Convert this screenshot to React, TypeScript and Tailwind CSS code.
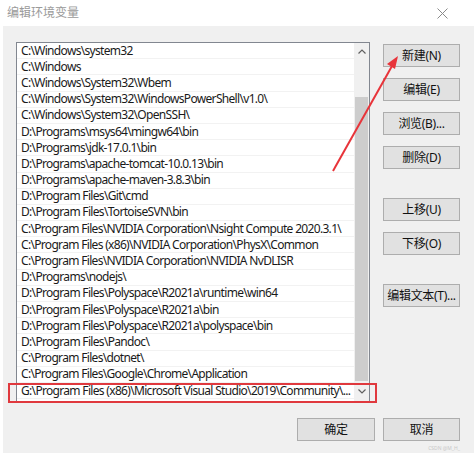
import React from 'react';

const PATHS = [
  'C:\\Windows\\system32',
  'C:\\Windows',
  'C:\\Windows\\System32\\Wbem',
  'C:\\Windows\\System32\\WindowsPowerShell\\v1.0\\',
  'C:\\Windows\\System32\\OpenSSH\\',
  'D:\\Programs\\msys64\\mingw64\\bin',
  'D:\\Programs\\jdk-17.0.1\\bin',
  'D:\\Programs\\apache-tomcat-10.0.13\\bin',
  'D:\\Programs\\apache-maven-3.8.3\\bin',
  'D:\\Program Files\\Git\\cmd',
  'D:\\Program Files\\TortoiseSVN\\bin',
  'C:\\Program Files\\NVIDIA Corporation\\Nsight Compute 2020.3.1\\',
  'C:\\Program Files (x86)\\NVIDIA Corporation\\PhysX\\Common',
  'C:\\Program Files\\NVIDIA Corporation\\NVIDIA NvDLISR',
  'D:\\Programs\\nodejs\\',
  'D:\\Program Files\\Polyspace\\R2021a\\runtime\\win64',
  'D:\\Program Files\\Polyspace\\R2021a\\bin',
  'D:\\Program Files\\Polyspace\\R2021a\\polyspace\\bin',
  'D:\\Program Files\\Pandoc\\',
  'C:\\Program Files\\dotnet\\',
  'C:\\Program Files\\Google\\Chrome\\Application',
  'G:\\Program Files (x86)\\Microsoft Visual Studio\\2019\\Community\\...',
];

const FONT = "font-['Segoe_UI','Noto_Sans','Noto_Sans_CJK_SC',sans-serif]";

function Btn({ label, className = '' }: { label: string; className?: string }) {
  return (
    <div
      className={`w-[77px] h-[23px] flex items-center justify-center bg-[#e1e1e1] border border-[#adadad] text-[12px] text-[#111] tracking-[-0.3px] ${className}`}
    >
      {label}
    </div>
  );
}

export default function App() {
  return (
    <div className={`relative w-[474px] h-[456px] bg-white overflow-hidden ${FONT}`}>
      {/* title bar */}
      <div className="h-[26px] flex items-center justify-between pl-[7px] pr-[26px]">
        <span className="text-[12px] text-[#9a9a9a] leading-none">编辑环境变量</span>
        <svg width="11" height="11" viewBox="0 0 11 11" className="text-[#8a8a8a]">
          <path d="M0.5 0.5 L10.5 10.5 M10.5 0.5 L0.5 10.5" stroke="currentColor" strokeWidth="1" />
        </svg>
      </div>

      {/* body */}
      <div className="ml-[3px] h-[427px] bg-[#f0f0f0] flex pt-[16px] pl-[13px]">
        {/* list */}
        <div className="w-[354px] h-[361px] bg-white border border-[#828790] flex">
          <div className="flex-1 min-w-0">
            {PATHS.map((p) => (
              <div
                key={p}
                className="h-[16.2px] flex items-center pl-[4px] text-[12px] tracking-[-0.68px] text-[#1a1a1a] leading-none whitespace-nowrap border-b border-[#f2f2f2]"
              >
                {p}
              </div>
            ))}
          </div>
          {/* scrollbar */}
          <div className="w-[15px] bg-[#f0f0f0] flex flex-col items-center">
            <div className="h-[17px] flex items-center justify-center">
              <svg width="8" height="5" viewBox="0 0 8 5">
                <path d="M0.5 4.5 L4 1 L7.5 4.5" fill="none" stroke="#606060" strokeWidth="1.2" />
              </svg>
            </div>
            <div className="mt-[37px] w-[13px] h-[284px] bg-[#cdcdcd]" />
            <div className="flex-1 flex items-center justify-center">
              <svg width="8" height="5" viewBox="0 0 8 5">
                <path d="M0.5 0.5 L4 4 L7.5 0.5" fill="none" stroke="#606060" strokeWidth="1.2" />
              </svg>
            </div>
          </div>
        </div>

        {/* buttons */}
        <div className="ml-[13px] flex flex-col pt-[2px]">
          <Btn label="新建(N)" />
          <Btn label="编辑(E)" className="mt-[11px]" />
          <Btn label="浏览(B)..." className="mt-[11px]" />
          <Btn label="删除(D)" className="mt-[11px]" />
          <Btn label="上移(U)" className="mt-[29px]" />
          <Btn label="下移(O)" className="mt-[11px]" />
          <Btn label="编辑文本(T)..." className="mt-[29px]" />
        </div>
      </div>

      {/* footer buttons */}
      <div className="absolute left-[297px] top-[418px] flex gap-[8px]">
        <Btn label="确定" className="w-[78px]" />
        <Btn label="取消" />
      </div>
      <div className="absolute right-[14px] top-[446px] text-[5px] text-[#c8c8c8] leading-none">CSDN @M_H_</div>

      {/* red annotation box */}
      <div className="absolute left-[8px] top-[383px] w-[369px] h-[20px] border-2 border-[#e0393e]" />

      {/* red arrow */}
      <svg className="absolute left-0 top-0" width="474" height="456" viewBox="0 0 474 456">
        <line x1="333" y1="171" x2="392" y2="66" stroke="#e8343a" strokeWidth="2" />
        <path d="M398 56 L387 64 L395 69 Z" fill="#e8343a" />
      </svg>
    </div>
  );
}
